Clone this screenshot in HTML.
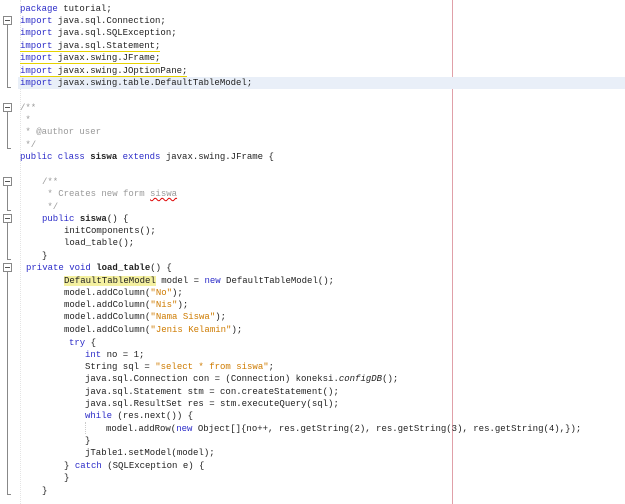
<!DOCTYPE html>
<html><head><meta charset="utf-8"><style>
body{margin:0;width:625px;height:504px;background:#fff;position:relative;overflow:hidden;font-family:"Liberation Mono",monospace;font-size:9px;color:#222}
.l{position:absolute;white-space:pre;height:12px;line-height:12px}
.k{color:#2b2bc8}.s{color:#ce7b00}.c{color:#9a9a9a}
.hl{position:absolute;left:18px;width:607px;height:12px;background:#e9eff8}
.f{position:absolute;left:3px;width:7px;height:7px;border:1px solid #888;background:#fff}
.f:after{content:"";position:absolute;left:1px;top:3px;width:5px;height:1px;background:#555}
.v{position:absolute;left:7px;width:1px;background:#888}
.t{position:absolute;left:7px;width:4px;height:1px;background:#888}
.u{border-bottom:1px solid #e6d200}
</style></head><body>
<div style="position:absolute;left:452px;top:0;width:1px;height:504px;background:#e0a0a8"></div>
<div style="position:absolute;left:20px;top:0;width:0;height:504px;border-left:1px dotted #e4e4e4"></div>
<div class="hl" style="top:77px"></div>
<div style="position:absolute;left:85px;top:422px;height:12px;border-left:1px dotted #ccc"></div>

<div class="f" style="top:16px"></div><div class="v" style="top:25px;height:62px"></div><div class="t" style="top:87px"></div>
<div class="f" style="top:103px"></div><div class="v" style="top:112px;height:36px"></div><div class="t" style="top:148px"></div>
<div class="f" style="top:177px"></div><div class="v" style="top:186px;height:24px"></div><div class="t" style="top:210px"></div>
<div class="f" style="top:214px"></div><div class="v" style="top:223px;height:36px"></div><div class="t" style="top:259px"></div>
<div class="f" style="top:263px"></div><div class="v" style="top:272px;height:222px"></div><div class="t" style="top:494px"></div>

<div class="l" style="top:3px;left:20px"><span class="k">package</span> tutorial;</div>
<div class="l" style="top:15px;left:20px"><span class="k">import</span> java.sql.Connection;</div>
<div class="l" style="top:27px;left:20px"><span class="k">import</span> java.sql.SQLException;</div>
<div class="l" style="top:40px;left:20px"><span class="u"><span class="k">import</span> java.sql.Statement;</span></div>
<div class="l" style="top:52px;left:20px"><span class="u"><span class="k">import</span> javax.swing.JFrame;</span></div>
<div class="l" style="top:65px;left:20px"><span class="u"><span class="k">import</span> javax.swing.JOptionPane;</span></div>
<div class="l" style="top:77px;left:20px"><span class="k">import</span> javax.swing.table.DefaultTableModel;</div>
<div class="l c" style="top:102px;left:20px">/**</div>
<div class="l c" style="top:114px;left:20px"> *</div>
<div class="l c" style="top:126px;left:20px"> * @author user</div>
<div class="l c" style="top:139px;left:20px"> */</div>
<div class="l" style="top:151px;left:20px"><span class="k">public class</span> <b>siswa</b> <span class="k">extends</span> javax.swing.JFrame {</div>
<div class="l c" style="top:176px;left:42px">/**</div>
<div class="l c" style="top:188px;left:42px"> * Creates new form <span style="text-decoration:underline wavy #d00">siswa</span></div>
<div class="l c" style="top:201px;left:42px"> */</div>
<div class="l" style="top:213px;left:42px"><span class="k">public</span> <b>siswa</b>() {</div>
<div class="l" style="top:225px;left:64px">initComponents();</div>
<div class="l" style="top:237px;left:64px">load_table();</div>
<div class="l" style="top:250px;left:42px">}</div>
<div class="l" style="top:262px;left:26px"><span class="k">private void</span> <b>load_table</b>() {</div>
<div class="l" style="top:275px;left:64px"><span style="background:#f4f0a0">DefaultTableModel</span> model = <span class="k">new</span> DefaultTableModel();</div>
<div class="l" style="top:287px;left:64px">model.addColumn(<span class="s">"No"</span>);</div>
<div class="l" style="top:299px;left:64px">model.addColumn(<span class="s">"Nis"</span>);</div>
<div class="l" style="top:311px;left:64px">model.addColumn(<span class="s">"Nama Siswa"</span>);</div>
<div class="l" style="top:324px;left:64px">model.addColumn(<span class="s">"Jenis Kelamin"</span>);</div>
<div class="l" style="top:337px;left:69px"><span class="k">try</span> {</div>
<div class="l" style="top:349px;left:85px"><span class="k">int</span> no = 1;</div>
<div class="l" style="top:361px;left:85px">String sql = <span class="s">"select * from siswa"</span>;</div>
<div class="l" style="top:373px;left:85px">java.sql.Connection con = (Connection) koneksi.<i>configDB</i>();</div>
<div class="l" style="top:386px;left:85px">java.sql.Statement stm = con.createStatement();</div>
<div class="l" style="top:398px;left:85px">java.sql.ResultSet res = stm.executeQuery(sql);</div>
<div class="l" style="top:410px;left:85px"><span class="k">while</span> (res.next()) {</div>
<div class="l" style="top:423px;left:106px">model.addRow(<span class="k">new</span> Object[]{no++, res.getString(2), res.getString(3), res.getString(4),});</div>
<div class="l" style="top:435px;left:85px">}</div>
<div class="l" style="top:447px;left:85px">jTable1.setModel(model);</div>
<div class="l" style="top:460px;left:64px">} <span class="k">catch</span> (SQLException e) {</div>
<div class="l" style="top:472px;left:64px">}</div>
<div class="l" style="top:485px;left:42px">}</div>
</body></html>
